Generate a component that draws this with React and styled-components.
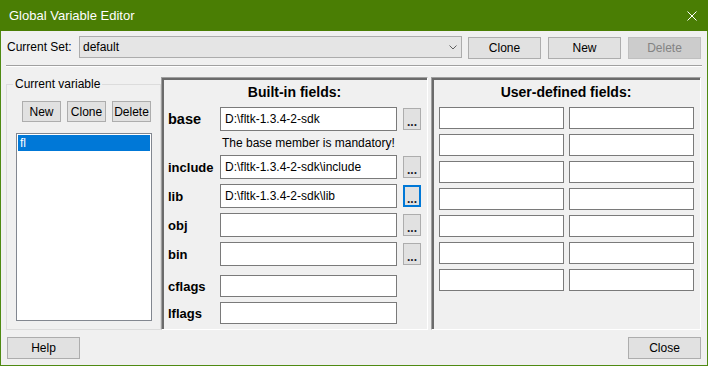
import React from "react";
import styled, { createGlobalStyle } from "styled-components";

const GlobalStyle = createGlobalStyle`
  html, body {
    margin: 0;
    padding: 0;
    background: #f0f0f0;
  }
  body {
    font-family: "Liberation Sans", Arial, sans-serif;
    font-size: 12px;
    color: #000;
  }
  * {
    box-sizing: border-box;
  }
`;

const Window = styled.div`
  width: 708px;
  height: 366px;
  display: flex;
  flex-direction: column;
  background: #f0f0f0;
`;

const TitleBar = styled.div`
  height: 31px;
  flex: none;
  background: #4a7e04;
  color: #fff;
  display: flex;
  align-items: center;
  justify-content: space-between;
  padding: 0 11px 0 9px;
  font-size: 13px;
`;

const Frame = styled.div`
  flex: 1;
  display: flex;
  flex-direction: column;
  border: 1px solid #4f8a12;
  border-top: none;
  padding: 0 6px 6px 6px;
`;

const TopRow = styled.div`
  display: flex;
  align-items: flex-start;
  height: 23px;
  margin-top: 5px;
`;

const SetLabel = styled.div`
  width: 72px;
  line-height: 22px;
`;

const Combo = styled.div`
  width: 383px;
  height: 22px;
  background: #e5e5e5;
  border: 1px solid #acacac;
  display: flex;
  align-items: center;
  justify-content: space-between;
  padding: 0 4px 0 3px;
`;

const Button = styled.button`
  width: ${(p) => p.$w || 73}px;
  height: ${(p) => p.$h || 22}px;
  margin-top: ${(p) => p.$top || 0}px;
  margin-left: ${(p) => p.$gap || 0}px;
  padding: 0;
  background: ${(p) => (p.disabled ? "#cccccc" : "#e1e1e1")};
  border: 1px solid ${(p) => (p.disabled ? "#bfbfbf" : "#adadad")};
  color: ${(p) => (p.disabled ? "#838383" : "#000")};
  font-family: "Liberation Sans", Arial, sans-serif;
  font-size: 12px;
  flex: none;
`;

const Separator = styled.div`
  height: 2px;
  margin: 6px -1px 0 -1px;
  border-top: 1px solid #a0a0a0;
  border-bottom: 1px solid #fff;
`;

const Main = styled.div`
  display: flex;
  height: 253px;
  margin: 10px 0 0 -1px;
`;

const GroupBox = styled.fieldset`
  width: 155px;
  height: 253px;
  margin: 0;
  padding: 0 8px 8px 9px;
  border: 1px solid #dcdcdc;
  min-width: 0;
`;

const Legend = styled.legend`
  font-size: 12px;
  line-height: 14px;
  padding: 0 2px;
  margin-left: -3px;
`;

const GroupButtons = styled.div`
  display: flex;
  margin-top: 10px;
  padding-left: 6px;
`;

const ListBox = styled.div`
  width: 136px;
  height: 188px;
  margin-top: 11px;
  background: #fff;
  border: 1px solid #828790;
  padding: 1px;
`;

const ListItem = styled.div`
  height: 16px;
  line-height: 16px;
  padding-left: 2px;
  background: ${(p) => (p.$selected ? "#0078d7" : "transparent")};
  color: ${(p) => (p.$selected ? "#fff" : "#000")};
`;

const Panel = styled.div`
  width: ${(p) => p.$w}px;
  height: 253px;
  margin-left: ${(p) => p.$gap || 0}px;
  border: 1px solid;
  border-color: #a0a0a0 #fff #fff #a0a0a0;
  box-shadow: inset 2px 2px 0 #6b6b6b;
  padding-left: ${(p) => p.$pad}px;
`;

const PanelHeading = styled.div`
  height: 29px;
  line-height: 29px;
  text-align: center;
  font-weight: bold;
  font-size: 14px;
  margin-left: -${(p) => p.$pad}px;
`;

const FieldRow = styled.div`
  display: flex;
  align-items: center;
  height: ${(p) => p.$h}px;
  margin-top: ${(p) => p.$gap || 0}px;
`;

const FieldLabel = styled.div`
  width: 52px;
  font-weight: bold;
  font-size: ${(p) => p.$size || 13}px;
`;

const TextBox = styled.input`
  width: ${(p) => p.$w || 177}px;
  height: ${(p) => p.$h || 24}px;
  border: 1px solid #7a7a7a;
  background: #fff;
  padding: 0 4px;
  margin: 0;
  font-family: "Liberation Sans", Arial, sans-serif;
  font-size: 12px;
  color: #000;
  outline: none;
`;

const BrowseButton = styled.button`
  width: 18px;
  height: 22px;
  margin-left: 6px;
  padding: 6px 0 0 0;
  background: #e1e1e1;
  border: ${(p) => (p.$focused ? "2px solid #0078d7" : "1px solid #adadad")};
  font-family: "Liberation Sans", Arial, sans-serif;
  font-weight: bold;
  font-size: 12px;
  line-height: 12px;
  color: #1a1a2a;
`;

const Message = styled.div`
  height: 24px;
  line-height: 24px;
  padding-left: 54px;
`;

const UserGrid = styled.div`
  display: grid;
  grid-template-columns: 125px 125px;
  grid-auto-rows: 22px;
  column-gap: 5px;
  row-gap: 5px;
`;

const BottomRow = styled.div`
  display: flex;
  justify-content: space-between;
  margin-top: 7px;
`;

const CloseIcon = () => (
  <svg width="10" height="10" viewBox="0 0 10 10">
    <path d="M0.5 0.5 L9.5 9.5 M9.5 0.5 L0.5 9.5" stroke="#fff" strokeWidth="1" />
  </svg>
);

const Chevron = () => (
  <svg width="8" height="5" viewBox="0 0 8 5">
    <path d="M0.5 0.5 L4 4 L7.5 0.5" stroke="#606060" strokeWidth="1" fill="none" />
  </svg>
);

const builtIn = [
  { name: "base", value: "D:\\fltk-1.3.4-2-sdk", h: 24, gap: 0, browse: true, size: 14.5 },
  { msg: "The base member is mandatory!" },
  { name: "include", value: "D:\\fltk-1.3.4-2-sdk\\include", h: 24, gap: 0, browse: true },
  { name: "lib", value: "D:\\fltk-1.3.4-2-sdk\\lib", h: 24, gap: 5, browse: true, focused: true },
  { name: "obj", value: "", h: 24, gap: 5, browse: true },
  { name: "bin", value: "", h: 24, gap: 5, browse: true },
  { name: "cflags", value: "", h: 22, gap: 9 },
  { name: "lflags", value: "", h: 22, gap: 5 },
];

export default function App() {
  return (
    <Window>
      <GlobalStyle />
      <TitleBar>
        <span>Global Variable Editor</span>
        <CloseIcon />
      </TitleBar>
      <Frame>
        <TopRow>
          <SetLabel>Current Set:</SetLabel>
          <Combo>
            <span>default</span>
            <Chevron />
          </Combo>
          <Button $top={1} $gap={6}>Clone</Button>
          <Button $top={1} $gap={7}>New</Button>
          <Button $top={1} $gap={7} disabled>Delete</Button>
        </TopRow>
        <Separator />
        <Main>
          <GroupBox>
            <Legend>Current variable</Legend>
            <GroupButtons>
              <Button $w={39} $h={21}>New</Button>
              <Button $w={39} $h={21} $gap={6}>Clone</Button>
              <Button $w={39} $h={21} $gap={6}>Delete</Button>
            </GroupButtons>
            <ListBox>
              <ListItem $selected>fl</ListItem>
            </ListBox>
          </GroupBox>
          <Panel $w={267} $pad={6}>
            <PanelHeading $pad={6}>Built-in fields:</PanelHeading>
            {builtIn.map((f, i) =>
              f.msg ? (
                <Message key={i}>{f.msg}</Message>
              ) : (
                <FieldRow key={f.name} $h={f.h} $gap={f.gap}>
                  <FieldLabel $size={f.size}>{f.name}</FieldLabel>
                  <TextBox $h={f.h} defaultValue={f.value} readOnly />
                  {f.browse && <BrowseButton $focused={f.focused}>...</BrowseButton>}
                </FieldRow>
              )
            )}
          </Panel>
          <Panel $w={270} $gap={3} $pad={7}>
            <PanelHeading $pad={7}>User-defined fields:</PanelHeading>
            <UserGrid>
              {Array.from({ length: 14 }).map((_, i) => (
                <TextBox key={i} $w={125} $h={22} readOnly />
              ))}
            </UserGrid>
          </Panel>
        </Main>
        <BottomRow>
          <Button>Help</Button>
          <Button>Close</Button>
        </BottomRow>
      </Frame>
    </Window>
  );
}
